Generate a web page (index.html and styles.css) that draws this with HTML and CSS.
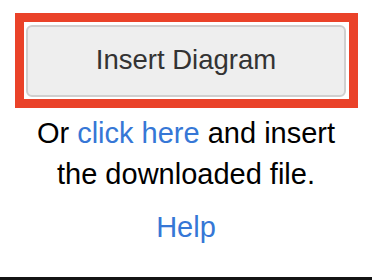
FILE: index.html
```html
<!DOCTYPE html>
<html>
<head>
<meta charset="utf-8">
<link rel="stylesheet" href="styles.css">
</head>
<body>
<div class="page">
  <div class="highlight">
    <button class="insert-btn">Insert Diagram</button>
  </div>
  <p class="hint">Or <a class="link" href="#">click here</a> and insert<br>the downloaded file.</p>
  <p class="help"><a class="link" href="#">Help</a></p>
</div>
<div class="bottom-bar"></div>
</body>
</html>
```

FILE: styles.css
```css
html, body {
  margin: 0;
  padding: 0;
  background: #ffffff;
}
body {
  width: 372px;
  height: 280px;
  overflow: hidden;
  font-family: "Liberation Sans", Arial, sans-serif;
}
.page {
  height: 277px;
  padding-top: 13px;
  box-sizing: border-box;
  display: flex;
  flex-direction: column;
  align-items: center;
}
.highlight {
  box-sizing: border-box;
  width: 343px;
  height: 95px;
  margin-left: 1px;
  border: 9px solid #ea4229;
  padding: 3px 3px 2px 2px;
  display: flex;
}
.insert-btn {
  width: 320px;
  height: 72px;
  box-sizing: border-box;
  border: 2px solid #cfcfcf;
  border-radius: 6px;
  background: #eeeeee;
  color: #333333;
  font-family: "Liberation Sans", Arial, sans-serif;
  font-size: 27.5px;
  padding: 0 0 2px 0;
  margin: 0;
}
.hint {
  margin: 5px 0 0 0;
  font-size: 29px;
  line-height: 41px;
  text-align: center;
  color: #000000;
}
.help {
  margin: 12px 0 0 0;
  font-size: 29px;
  line-height: 41px;
  text-align: center;
}
.link {
  color: #3677d6;
  text-decoration: none;
}
.bottom-bar {
  height: 3px;
  background: #141414;
}
```
